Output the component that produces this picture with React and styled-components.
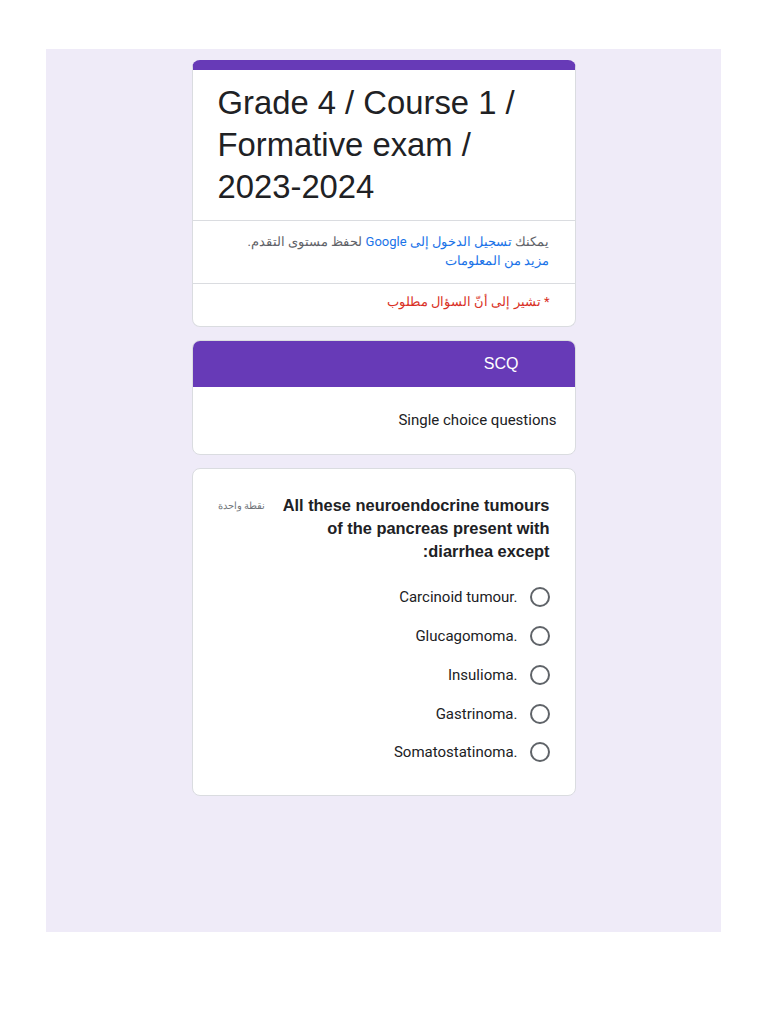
import React from "react";
import styled, { createGlobalStyle } from "styled-components";

const GlobalStyle = createGlobalStyle`
  html, body {
    margin: 0;
    padding: 0;
    background: #ffffff;
  }
  body {
    font-family: Roboto, "Noto Sans", Arial, sans-serif;
    color: #202124;
  }
`;

const Page = styled.div`
  padding: 49px 47px 0 46px;
`;

const Panel = styled.div`
  background: #efebf8;
  height: 883px;
  padding-top: 11px;
  box-sizing: border-box;
`;

const Column = styled.div`
  width: 384px;
  margin: 0 auto;
  display: flex;
  flex-direction: column;
  gap: 13px;
  direction: rtl;
`;

const Card = styled.div`
  background: #ffffff;
  border: 1px solid #dadce0;
  border-radius: 8px;
  overflow: hidden;
  box-sizing: border-box;
  ${(p) => p.$accent && `border-top: 10px solid #673ab7;`}
`;

const Title = styled.h1`
  margin: 0;
  padding: 12px 25px 12px;
  direction: ltr;
  text-align: left;
  font-family: "Liberation Sans", Arial, sans-serif;
  font-weight: 400;
  font-size: 32.8px;
  line-height: 42px;
  color: #202124;
`;

const Section = styled.div`
  border-top: 1px solid #dadce0;
  padding: ${(p) => p.$pad || "11px 25px 13px"};
  font-size: 13px;
  line-height: 19px;
  color: #5f6368;
`;

const Link = styled.span`
  color: #1a73e8;
`;

const Required = styled.span`
  color: #d93025;
  font-size: 13px;
`;

const Header = styled.div`
  background: #673ab7;
  color: #ffffff;
  height: 46px;
  display: flex;
  align-items: center;
  padding-right: 56px;
  font-family: "Liberation Sans", Arial, sans-serif;
  font-size: 16px;
`;

const Description = styled.div`
  padding: 23px 18px 24px;
  font-size: 15px;
  line-height: 20px;
  color: #202124;
`;

const QuestionBody = styled.div`
  padding: 25px 25px 23px;
`;

const QuestionHead = styled.div`
  display: flex;
  align-items: flex-start;
  justify-content: space-between;
  gap: 16px;
`;

const QuestionText = styled.div`
  font-family: "Liberation Sans", Arial, sans-serif;
  font-weight: 700;
  font-size: 16.4px;
  line-height: 23px;
  color: #202124;
  max-width: 275px;
`;

const Points = styled.div`
  font-size: 10px;
  line-height: 23px;
  color: #70757a;
  white-space: nowrap;
`;

const Options = styled.div`
  margin-top: 15px;
  display: flex;
  flex-direction: column;
`;

const Option = styled.label`
  display: flex;
  align-items: center;
  gap: 12px;
  height: 38.75px;
  font-size: 15px;
  color: #202124;
`;

const Radio = styled.span`
  width: 20px;
  height: 20px;
  box-sizing: border-box;
  border: 2px solid #5f6368;
  border-radius: 50%;
  flex-shrink: 0;
`;

const options = [
  "Carcinoid tumour.",
  "Glucagomoma.",
  "Insulioma.",
  "Gastrinoma.",
  "Somatostatinoma.",
];

export default function App() {
  return (
    <>
      <GlobalStyle />
      <Page>
        <Panel>
          <Column>
            <Card $accent>
              <Title>Grade 4 / Course 1 / Formative exam / 2023-2024</Title>
              <Section>
                يمكنك <Link>تسجيل الدخول إلى Google</Link> لحفظ مستوى التقدم.
                <br />
                <Link>مزيد من المعلومات</Link>
              </Section>
              <Section $pad="8px 25px 15px">
                <Required>* تشير إلى أنّ السؤال مطلوب</Required>
              </Section>
            </Card>

            <Card>
              <Header>SCQ</Header>
              <Description>Single choice questions</Description>
            </Card>

            <Card>
              <QuestionBody>
                <QuestionHead>
                  <QuestionText>
                    All these neuroendocrine tumours of the pancreas present
                    with diarrhea except:
                  </QuestionText>
                  <Points>نقطة واحدة</Points>
                </QuestionHead>
                <Options>
                  {options.map((o) => (
                    <Option key={o}>
                      <Radio />
                      <span dir="ltr">{o}</span>
                    </Option>
                  ))}
                </Options>
              </QuestionBody>
            </Card>
          </Column>
        </Panel>
      </Page>
    </>
  );
}
